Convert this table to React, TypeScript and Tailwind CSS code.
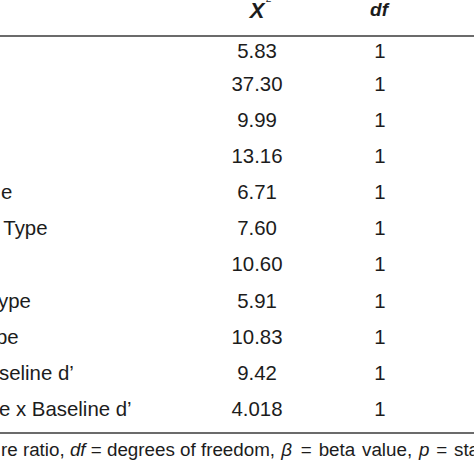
export default function App() {
  const rows = [
    { label: '', ml: 'ml-0', chi: '5.83' },
    { label: '', ml: 'ml-0', chi: '37.30' },
    { label: '', ml: 'ml-0', chi: '9.99' },
    { label: '', ml: 'ml-0', chi: '13.16' },
    { label: 'e', ml: 'ml-[1px]', chi: '6.71' },
    { label: ' Type', ml: 'ml-[-2px]', chi: '7.60' },
    { label: '', ml: 'ml-0', chi: '10.60' },
    { label: 'ype', ml: 'ml-[-2px]', chi: '5.91' },
    { label: 'pe', ml: 'ml-[-4px]', chi: '10.83' },
    { label: 'seline d\u2019', ml: 'ml-[-1px]', chi: '9.42' },
    { label: 'e x Baseline d\u2019', ml: 'ml-[-1px]', chi: '4.018' },
  ];

  return (
    <div
      className="w-[474px] h-[474px] overflow-hidden bg-white text-[#1c1c1c]"
      style={{ fontFamily: '"Liberation Sans", Arial, sans-serif' }}
    >
      {/* header */}
      <div className="grid grid-cols-[207px_100px_146px_1fr] h-[37px] border-b-2 border-[#6b6b6b]">
        <div></div>
        <div className="flex justify-center items-end pb-[13px]">
          <span className="relative text-[22px] leading-none font-bold italic">
            X
            <span className="absolute -top-[6px] -right-[7px] text-[10px] font-normal not-italic">2</span>
          </span>
        </div>
        <div className="flex justify-center items-end pb-[16px]">
          <span className="text-[19px] leading-none font-bold italic pr-[2px]">df</span>
        </div>
        <div></div>
      </div>

      {/* body */}
      <div className="border-b-2 border-[#6b6b6b] pb-[5px]">
        {rows.map((r, i) => (
          <div
            key={i}
            className={`grid grid-cols-[207px_100px_146px_1fr] text-[20.4px] ${i === 0 ? 'h-[29px] leading-[29px]' : 'h-[36.1px] leading-[36px]'}`}
          >
            <div className="overflow-hidden whitespace-pre">
              <span className={r.ml}>{r.label}</span>
            </div>
            <div className="text-center">{r.chi}</div>
            <div className="text-center">1</div>
            <div></div>
          </div>
        ))}
      </div>

      {/* footnote */}
      <div className="whitespace-nowrap text-[18.8px] leading-[24px] pt-[4px] ml-[1px]">
        re ratio, <i>df</i> = degrees of freedom, <i className="ml-[1px] mr-[2px]">&beta;</i>
        <span className="[word-spacing:1.6px]">
          {' '}= beta value, <i>p</i> = statistical significance
        </span>
      </div>
    </div>
  );
}
